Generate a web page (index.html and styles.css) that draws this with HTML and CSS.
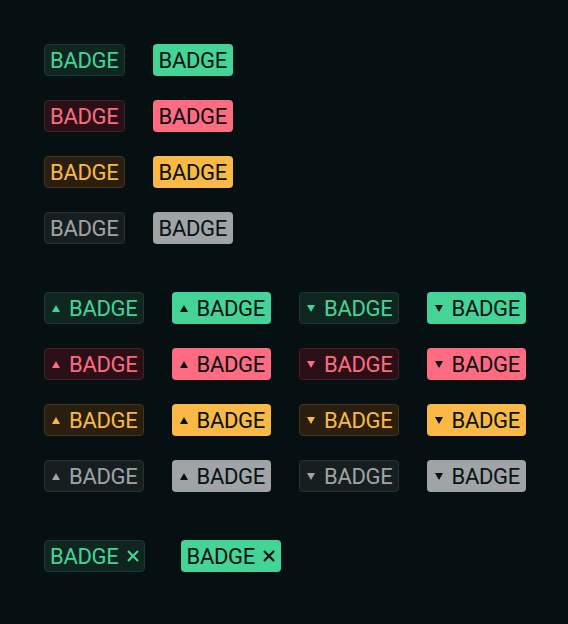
FILE: index.html
```html
<!DOCTYPE html>
<html lang="en">
<head>
    <meta charset="UTF-8">
    <title>Badges</title>
    <link rel="stylesheet" href="styles.css">
</head>
<body>
    <div class="group">
        <div class="row"><span class="badge green">BADGE</span><span class="badge green solid">BADGE</span></div>
        <div class="row"><span class="badge red">BADGE</span><span class="badge red solid">BADGE</span></div>
        <div class="row"><span class="badge yellow">BADGE</span><span class="badge yellow solid">BADGE</span></div>
        <div class="row"><span class="badge gray">BADGE</span><span class="badge gray solid">BADGE</span></div>
    </div>

    <div class="group">
        <div class="row">
            <span class="badge green"><i class="tri up"></i>BADGE</span>
            <span class="badge green solid"><i class="tri up"></i>BADGE</span>
            <span class="badge green"><i class="tri down"></i>BADGE</span>
            <span class="badge green solid"><i class="tri down"></i>BADGE</span>
        </div>
        <div class="row">
            <span class="badge red"><i class="tri up"></i>BADGE</span>
            <span class="badge red solid"><i class="tri up"></i>BADGE</span>
            <span class="badge red"><i class="tri down"></i>BADGE</span>
            <span class="badge red solid"><i class="tri down"></i>BADGE</span>
        </div>
        <div class="row">
            <span class="badge yellow"><i class="tri up"></i>BADGE</span>
            <span class="badge yellow solid"><i class="tri up"></i>BADGE</span>
            <span class="badge yellow"><i class="tri down"></i>BADGE</span>
            <span class="badge yellow solid"><i class="tri down"></i>BADGE</span>
        </div>
        <div class="row">
            <span class="badge gray"><i class="tri up"></i>BADGE</span>
            <span class="badge gray solid"><i class="tri up"></i>BADGE</span>
            <span class="badge gray"><i class="tri down"></i>BADGE</span>
            <span class="badge gray solid"><i class="tri down"></i>BADGE</span>
        </div>
    </div>

    <div class="group">
        <div class="row wide">
            <span class="badge green">BADGE<svg class="close" viewBox="0 0 12 12"><path d="M1 1L11 11M11 1L1 11"/></svg></span>
            <span class="badge green solid">BADGE<svg class="close" viewBox="0 0 12 12"><path d="M1 1L11 11M11 1L1 11"/></svg></span>
        </div>
    </div>
</body>
</html>
```

FILE: styles.css
```css
body {
    margin: 0;
    padding: 44px;
    background-color: #061012;
    font-family: Roboto, "Liberation Sans", sans-serif;
}
.group {
    display: flex;
    flex-direction: column;
    gap: 24px;
    margin-bottom: 48px;
}
.group:last-child {
    margin-bottom: 0;
}
.row {
    display: flex;
    gap: 28px;
}
.row.wide {
    gap: 36px;
}
.badge {
    display: inline-flex;
    align-items: center;
    box-sizing: border-box;
    height: 32px;
    padding: 1px 5px 0;
    border: 1px solid;
    border-radius: 4px;
    font-size: 22px;
    letter-spacing: -0.3px;
    line-height: 1;
}
.green { color: #44d497; background: #0e2520; border-color: #1c3a31; }
.red { color: #ff6b81; background: #2a0f17; border-color: #46202a; }
.yellow { color: #f9b944; background: #2a1f0f; border-color: #45341a; }
.gray { color: #a0a4a6; background: #171e20; border-color: #293133; }
.badge.solid { color: #081214; border-color: transparent; }
.green.solid { background: #44d497; }
.red.solid { background: #ff6b81; }
.yellow.solid { background: #f9b944; }
.gray.solid { background: #a0a4a6; }
.tri {
    width: 0;
    height: 0;
    margin: -1px 9px 0 2px;
    border-left: 4px solid transparent;
    border-right: 4px solid transparent;
}
.tri.up { border-bottom: 7px solid currentColor; }
.tri.down { border-top: 7px solid currentColor; }
.close {
    width: 12px;
    height: 12px;
    margin: -1px 0 0 8px;
    fill: none;
    stroke: currentColor;
    stroke-width: 2.2;
}
```
